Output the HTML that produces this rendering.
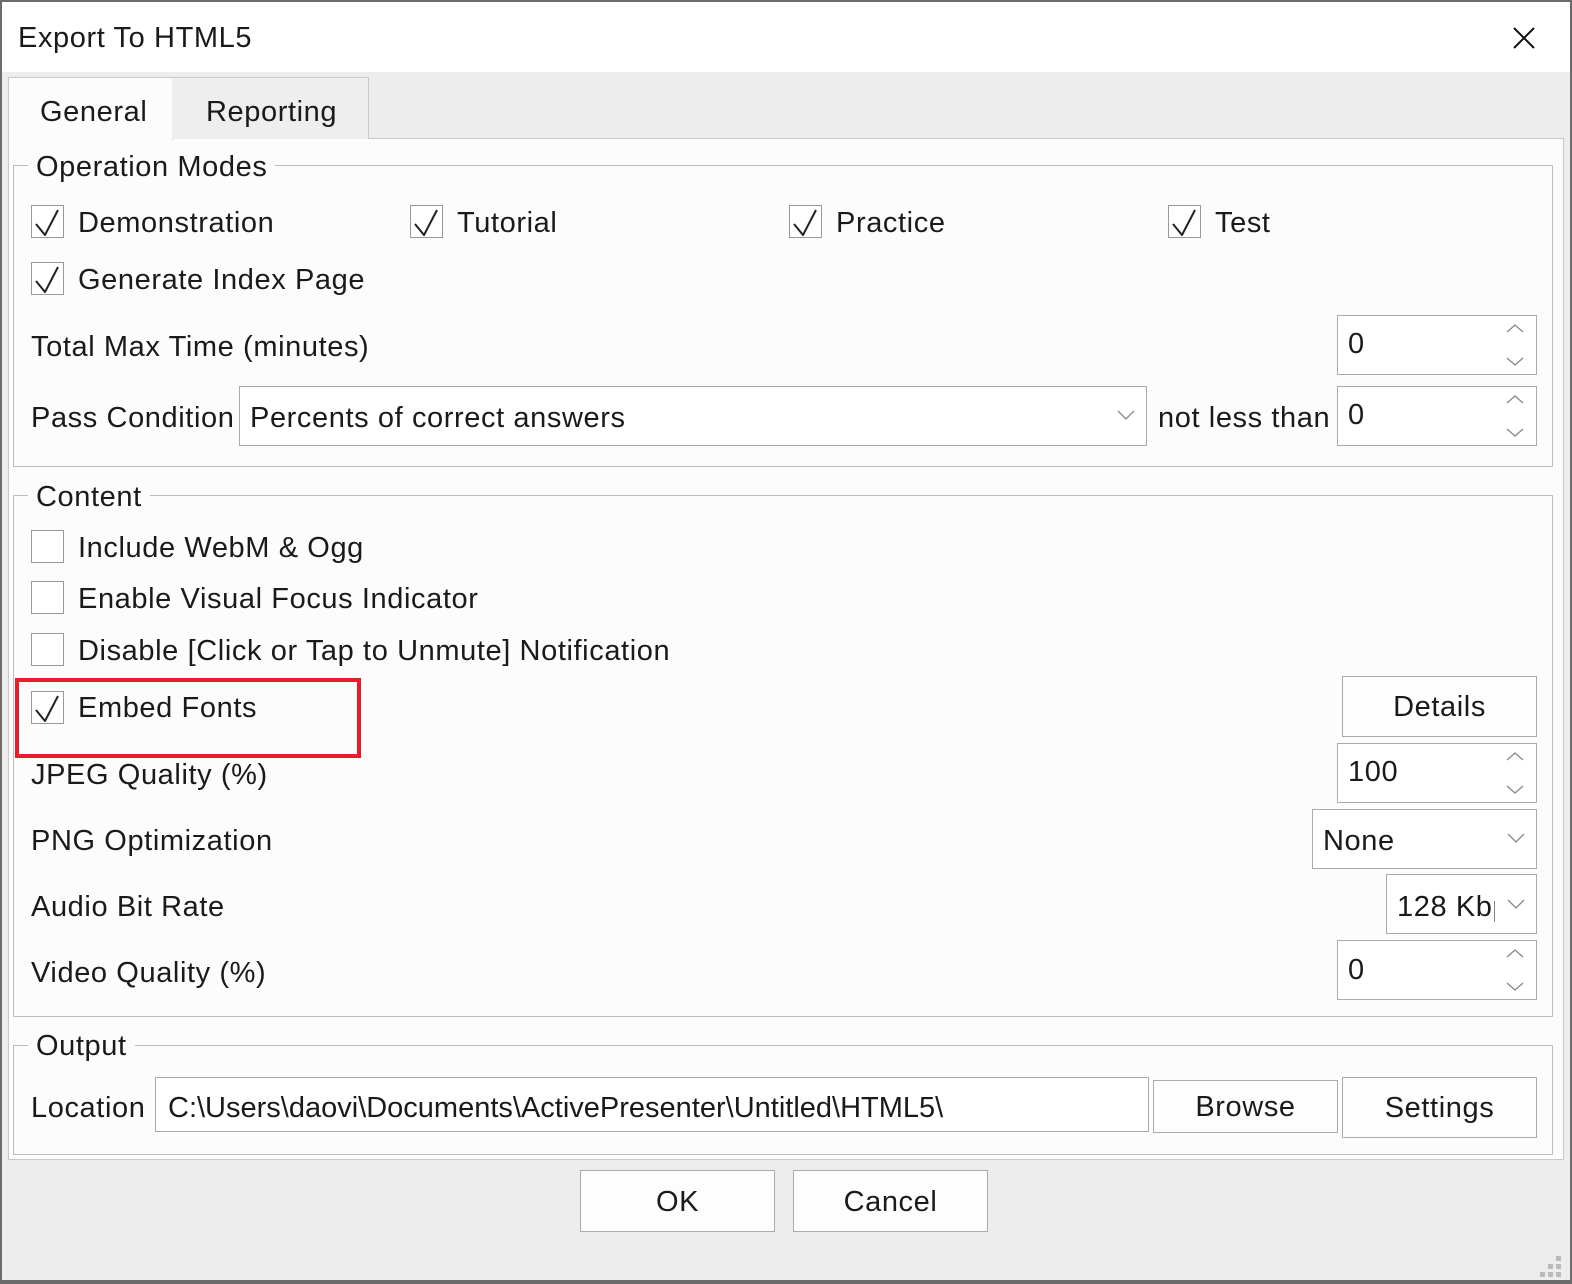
<!DOCTYPE html>
<html><head><meta charset="utf-8"><style>
*{margin:0;padding:0;box-sizing:border-box}
body{width:1572px;height:1284px;background:#ededed;position:relative;overflow:hidden;font-family:"Liberation Sans",sans-serif;font-size:29px;letter-spacing:0.6px;color:#1a1a1a}
.a{position:absolute}
.t{position:absolute;line-height:32px;white-space:nowrap}
.cb{position:absolute;width:33px;height:33px;border:1px solid #999;background:#fff}
.cb svg{position:absolute;left:2px;top:2px}
.box{position:absolute;border:1px solid #bdbdbd}
.leg{position:absolute;background:#fcfcfc;padding:0 8px;line-height:32px}
.in{position:absolute;border:1px solid #aaa;background:#fff}
.btn{position:absolute;border:1px solid #aaa;background:#fdfdfd;text-align:center}
</style></head><body>
<div class="a" style="left:0;top:0;width:1572px;height:1284px;border:2px solid #6b6b6b;border-bottom-width:4px"></div>
<div class="a" style="left:2px;top:2px;width:1568px;height:70px;background:#fff"></div>
<div class="t" style="left:18px;top:22px">Export To HTML5</div>
<svg class="a" style="left:1512px;top:26px" width="24" height="24"><path d="M2 2L22 22M22 2L2 22" stroke="#111" stroke-width="2"/></svg>

<div class="a" style="left:8px;top:138px;width:1556px;height:1022px;background:#fcfcfc;border:1px solid #c8c8c8"></div>
<div class="a" style="left:8px;top:77px;width:1556px;height:62px;border-bottom:1px solid #c8c8c8"></div>
<div class="a" style="left:8px;top:77px;width:165px;height:63px;background:#fcfcfc;border:1px solid #c8c8c8;border-bottom:none"></div>
<div class="a" style="left:172px;top:77px;width:197px;height:62px;background:#eee;border:1px solid #c8c8c8;border-bottom:none;border-left:none"></div>
<div class="t" style="left:40px;top:96px">General</div>
<div class="t" style="left:206px;top:96px">Reporting</div>

<div class="box" style="left:13px;top:165px;width:1540px;height:302px"></div>
<div class="leg" style="left:28px;top:151px">Operation Modes</div>
<div class="cb" style="left:31px;top:205px"><svg width="28" height="28"><path d="M2 16L11 27L24 2" fill="none" stroke="#222" stroke-width="2"/></svg></div>
<div class="t" style="left:78px;top:207px">Demonstration</div>
<div class="cb" style="left:410px;top:205px"><svg width="28" height="28"><path d="M2 16L11 27L24 2" fill="none" stroke="#222" stroke-width="2"/></svg></div>
<div class="t" style="left:457px;top:207px">Tutorial</div>
<div class="cb" style="left:789px;top:205px"><svg width="28" height="28"><path d="M2 16L11 27L24 2" fill="none" stroke="#222" stroke-width="2"/></svg></div>
<div class="t" style="left:836px;top:207px">Practice</div>
<div class="cb" style="left:1168px;top:205px"><svg width="28" height="28"><path d="M2 16L11 27L24 2" fill="none" stroke="#222" stroke-width="2"/></svg></div>
<div class="t" style="left:1215px;top:207px">Test</div>
<div class="cb" style="left:31px;top:262px"><svg width="28" height="28"><path d="M2 16L11 27L24 2" fill="none" stroke="#222" stroke-width="2"/></svg></div>
<div class="t" style="left:78px;top:264px">Generate Index Page</div>

<div class="t" style="left:31px;top:331px">Total Max Time (minutes)</div>
<div class="in" style="left:1337px;top:315px;width:200px;height:60px"></div>
<div class="t" style="left:1348px;top:328px">0</div>
<svg class="a" style="left:1505px;top:322px" width="20" height="46"><path d="M2 10L10 3L18 10M2 36L10 43L18 36" fill="none" stroke="#888" stroke-width="1.3"/></svg>

<div class="t" style="left:31px;top:402px">Pass Condition</div>
<div class="in" style="left:239px;top:386px;width:908px;height:60px"></div>
<div class="t" style="left:250px;top:402px">Percents of correct answers</div>
<svg class="a" style="left:1116px;top:408px" width="20" height="14"><path d="M2 3L10 11L18 3" fill="none" stroke="#888" stroke-width="1.3"/></svg>
<div class="t" style="left:1158px;top:402px">not less than</div>
<div class="in" style="left:1337px;top:386px;width:200px;height:60px"></div>
<div class="t" style="left:1348px;top:399px">0</div>
<svg class="a" style="left:1505px;top:393px" width="20" height="46"><path d="M2 10L10 3L18 10M2 36L10 43L18 36" fill="none" stroke="#888" stroke-width="1.3"/></svg>

<div class="box" style="left:13px;top:495px;width:1540px;height:522px"></div>
<div class="leg" style="left:28px;top:481px">Content</div>
<div class="cb" style="left:31px;top:530px"></div>
<div class="t" style="left:78px;top:532px">Include WebM &amp; Ogg</div>
<div class="cb" style="left:31px;top:581px"></div>
<div class="t" style="left:78px;top:583px">Enable Visual Focus Indicator</div>
<div class="cb" style="left:31px;top:633px"></div>
<div class="t" style="left:78px;top:635px">Disable [Click or Tap to Unmute] Notification</div>
<div class="cb" style="left:31px;top:691px"><svg width="28" height="28"><path d="M2 16L11 27L24 2" fill="none" stroke="#222" stroke-width="2"/></svg></div>
<div class="t" style="left:78px;top:692px">Embed Fonts</div>
<div class="a" style="left:15px;top:678px;width:346px;height:80px;border:4px solid #e81d2a"></div>
<div class="btn" style="left:1342px;top:676px;width:195px;height:61px;line-height:60px">Details</div>

<div class="t" style="left:31px;top:759px">JPEG Quality (%)</div>
<div class="in" style="left:1337px;top:743px;width:200px;height:60px"></div>
<div class="t" style="left:1348px;top:756px">100</div>
<svg class="a" style="left:1505px;top:750px" width="20" height="46"><path d="M2 10L10 3L18 10M2 36L10 43L18 36" fill="none" stroke="#888" stroke-width="1.3"/></svg>

<div class="t" style="left:31px;top:825px">PNG Optimization</div>
<div class="in" style="left:1312px;top:809px;width:225px;height:60px"></div>
<div class="t" style="left:1323px;top:825px">None</div>
<svg class="a" style="left:1506px;top:831px" width="20" height="14"><path d="M2 3L10 11L18 3" fill="none" stroke="#888" stroke-width="1.3"/></svg>

<div class="t" style="left:31px;top:891px">Audio Bit Rate</div>
<div class="in" style="left:1386px;top:874px;width:151px;height:60px;overflow:hidden"></div>
<div class="a" style="left:1397px;top:891px;width:98px;overflow:hidden;line-height:32px;white-space:nowrap">128 Kbps</div>
<svg class="a" style="left:1506px;top:897px" width="20" height="14"><path d="M2 3L10 11L18 3" fill="none" stroke="#888" stroke-width="1.3"/></svg>

<div class="t" style="left:31px;top:957px">Video Quality (%)</div>
<div class="in" style="left:1337px;top:940px;width:200px;height:60px"></div>
<div class="t" style="left:1348px;top:954px">0</div>
<svg class="a" style="left:1505px;top:947px" width="20" height="46"><path d="M2 10L10 3L18 10M2 36L10 43L18 36" fill="none" stroke="#888" stroke-width="1.3"/></svg>

<div class="box" style="left:13px;top:1045px;width:1540px;height:110px"></div>
<div class="leg" style="left:28px;top:1030px">Output</div>
<div class="t" style="left:31px;top:1092px">Location</div>
<div class="in" style="left:155px;top:1077px;width:994px;height:55px"></div>
<div class="t" style="left:168px;top:1092px;letter-spacing:0">C:\Users\daovi\Documents\ActivePresenter\Untitled\HTML5\</div>
<div class="btn" style="left:1153px;top:1080px;width:185px;height:53px;line-height:52px">Browse</div>
<div class="btn" style="left:1342px;top:1077px;width:195px;height:61px;line-height:60px">Settings</div>

<div class="btn" style="left:580px;top:1170px;width:195px;height:62px;line-height:62px">OK</div>
<div class="btn" style="left:793px;top:1170px;width:195px;height:62px;line-height:62px">Cancel</div>
<svg class="a" style="left:1540px;top:1256px" width="24" height="24"><g fill="#bbb"><rect x="16" y="0" width="5" height="5"/><rect x="8" y="8" width="5" height="5"/><rect x="16" y="8" width="5" height="5"/><rect x="0" y="16" width="5" height="5"/><rect x="8" y="16" width="5" height="5"/><rect x="16" y="16" width="5" height="5"/></g></svg>
</body></html>
